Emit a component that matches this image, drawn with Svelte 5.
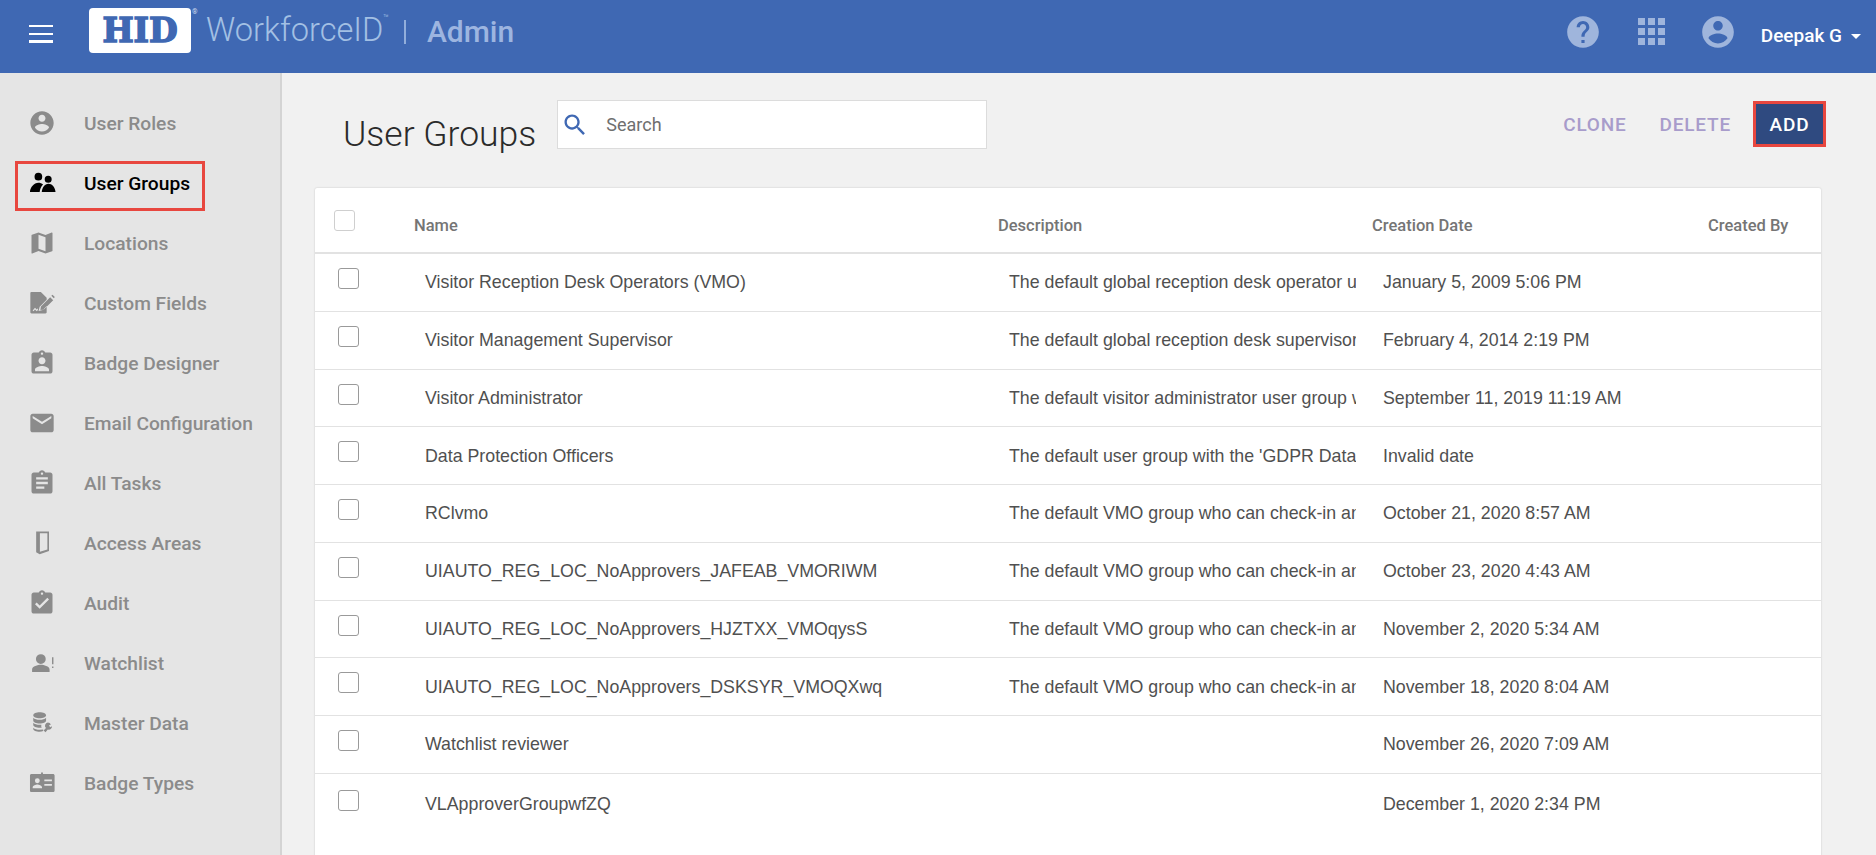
<script>
  const clipboard = 'M19 3h-4.18C14.4 1.84 13.3 1 12 1c-1.3 0-2.4.84-2.82 2H5c-1.1 0-2 .9-2 2v14c0 1.1.9 2 2 2h14c1.1 0 2-.9 2-2V5c0-1.1-.9-2-2-2zm-7 0c.55 0 1 .45 1 1s-.45 1-1 1-1-.45-1-1 .45-1 1-1z';
  const account = 'M12 2C6.48 2 2 6.48 2 12s4.48 10 10 10 10-4.48 10-10S17.52 2 12 2zm0 3c1.66 0 3 1.34 3 3s-1.34 3-3 3-3-1.34-3-3 1.34-3 3-3zm0 14.2c-2.5 0-4.71-1.28-6-3.22.03-1.99 4-3.08 6-3.08 1.99 0 5.97 1.09 6 3.08-1.29 1.94-3.5 3.22-6 3.22z';

  const nav = [
    { label: 'User Roles', icon: account },
    { label: 'User Groups', active: true, icon: 'M8.9 3.3a3.3 3.3 0 1 1 0 6.6 3.3 3.3 0 0 1 0-6.6zM17.3 5.8a3 3 0 1 1 0 6 3 3 0 0 1 0-6zM1.7 19.7c.1-4 3.5-8 7.2-8 1.5 0 2.9.5 4 1.5-1.6 1.6-2.7 4-2.9 6.5zM11.8 19.7c.3-3.5 2.5-7 5.7-7 3 0 5.8 3 6.1 7z' },
    { label: 'Locations', icon: 'M20.5 3l-.16.03L15 5.1 9 3 3.36 4.9c-.21.07-.36.25-.36.48V20.5c0 .28.22.5.5.5l.16-.03L9 18.9l6 2.1 5.64-1.9c.21-.07.36-.25.36-.48V3.5c0-.28-.22-.5-.5-.5zM15 19l-6-2.11V5l6 2.11V19z' },
    { label: 'Custom Fields', icon: 'M2 3.6c0-.6.4-1 1-1h8l5 5v1.6l-6 6-.9 3.6 3.6-.9 3.3-3.3v5.3c0 .6-.4 1-1 1H3c-.6 0-1-.4-1-1zM4 18.5l2-2.5 1.5 1.5 1-1v1.5L7.5 19 6 17.6 4.7 19zM19 7l2.6 2.6-8 8-3 .5.5-3zM20 5.8l1-.9 2 2-.9 1z' },
    { label: 'Badge Designer', icon: clipboard + 'm0 4c1.66 0 3 1.34 3 3s-1.34 3-3 3-3-1.34-3-3 1.34-3 3-3zm6 12H6v-1.4c0-2 4-3.1 6-3.1s6 1.1 6 3.1V19z' },
    { label: 'Email Configuration', icon: 'M20 4H4c-1.1 0-1.99.9-1.99 2L2 18c0 1.1.9 2 2 2h16c1.1 0 2-.9 2-2V6c0-1.1-.9-2-2-2zm0 4l-8 5-8-5V6l8 5 8-5v2z' },
    { label: 'All Tasks', icon: clipboard + 'm2 14H7v-2h7v2zm3-4H7v-2h10v2zm0-4H7V7h10v2z' },
    { label: 'Access Areas', icon: 'M7 2.2h11v16.6l-8 2.8-3-1.6zM10.2 3.6v15.9l6.4-1.9V3.6z' },
    { label: 'Audit', icon: clipboard + 'm-2 14l-4-4 1.41-1.41L10 14.17l6.59-6.59L18 9l-8 8z' },
    { label: 'Watchlist', icon: 'M11 4.4a4.2 4.2 0 1 1 0 8.4 4.2 4.2 0 0 1 0-8.4zM3.5 19.8v-2.2c0-2.7 5-4 7.5-4s7.5 1.3 7.5 4v2.2zM20.6 7h1.2v6h-1.2zM20.6 15h1.2v1.3h-1.2z' },
    { label: 'Master Data', icon: 'M10 2.8c3 0 5.5 1.1 5.5 2.6S13 8 10 8 4.5 6.9 4.5 5.4 7 2.8 10 2.8zM4.5 7.4C5.6 8.7 7.7 9.2 10 9.2s4.4-.5 5.5-1.8v2.4c0 1.5-2.5 2.6-5.5 2.6s-5.5-1.1-5.5-2.6zM4.5 11.8c1.1 1.3 3.2 1.8 5.5 1.8l1.5-.1c-.3.8-.2 1.7.2 2.5l-1.7.1c-3 0-5.5-1.1-5.5-2.6zM4.5 16c1.1 1.3 3.2 1.8 5.5 1.8l3-.3v1.4c-.9.4-1.9.6-3 .6-3 0-5.5-1.1-5.5-2.6zM17 11.5a2.8 2.8 0 0 1 2.6 1.7l-1.6.9 1 1.6 1.6-.9a2.8 2.8 0 0 1-3.6 2.8l-2 2.3-1.6-1.4 2-2.2a2.8 2.8 0 0 1 1.6-4.8z' },
    { label: 'Badge Types', icon: 'M3 4.2h8.2V3h1.6v1.2H21.4c.8 0 1.4.6 1.4 1.4v12.8c0 .8-.6 1.4-1.4 1.4H3c-.8 0-1.3-.6-1.3-1.4V5.6c0-.8.5-1.4 1.3-1.4zM8 8a2.1 2.1 0 1 0 0 4.2 2.1 2.1 0 0 0 0-4.2zM4 16.6h8v-1c0-1.5-2.7-2.4-4-2.4s-4 .9-4 2.4zM14 9v1.6h6.5V9zM14 12.8v1.6h6.5v-1.6z' }
  ];

  const rows = [
    { name: 'Visitor Reception Desk Operators (VMO)', desc: 'The default global reception desk operator user group with access to the visitor module', date: 'January 5, 2009 5:06 PM' },
    { name: 'Visitor Management Supervisor', desc: 'The default global reception desk supervisor user group with access to the visitor module', date: 'February 4, 2014 2:19 PM' },
    { name: 'Visitor Administrator', desc: 'The default visitor administrator user group with access to all visitor settings', date: 'September 11, 2019 11:19 AM' },
    { name: 'Data Protection Officers', desc: "The default user group with the 'GDPR Data Protection Officer' role assigned", date: 'Invalid date' },
    { name: 'RClvmo', desc: 'The default VMO group who can check-in and check-out visitors', date: 'October 21, 2020 8:57 AM' },
    { name: 'UIAUTO_REG_LOC_NoApprovers_JAFEAB_VMORIWM', desc: 'The default VMO group who can check-in and check-out visitors', date: 'October 23, 2020 4:43 AM' },
    { name: 'UIAUTO_REG_LOC_NoApprovers_HJZTXX_VMOqysS', desc: 'The default VMO group who can check-in and check-out visitors', date: 'November 2, 2020 5:34 AM' },
    { name: 'UIAUTO_REG_LOC_NoApprovers_DSKSYR_VMOQXwq', desc: 'The default VMO group who can check-in and check-out visitors', date: 'November 18, 2020 8:04 AM' },
    { name: 'Watchlist reviewer', desc: '', date: 'November 26, 2020 7:09 AM' },
    { name: 'VLApproverGroupwfZQ', desc: '', date: 'December 1, 2020 2:34 PM' }
  ];
</script>

<div class="page">
  <header class="topbar">
    <button class="burger" aria-label="Menu"><span></span><span></span><span></span></button>
    <div class="logo"><span class="hid">HID</span></div>
    <span class="reg">®</span>
    <span class="product">WorkforceID<sup>™</sup></span>
    <span class="divider"></span>
    <span class="admin">Admin</span>
    <div class="top-right">
      <svg class="top-icon help" viewBox="0 0 24 24"><path d="M12 2C6.48 2 2 6.48 2 12s4.48 10 10 10 10-4.48 10-10S17.52 2 12 2zm1 17h-2v-2h2v2zm2.07-7.75l-.9.92C13.45 12.9 13 13.5 13 15h-2v-.5c0-1.1.45-2.1 1.17-2.83l1.24-1.26c.37-.36.59-.86.59-1.41 0-1.1-.9-2-2-2s-2 .9-2 2H8c0-2.21 1.79-4 4-4s4 1.79 4 4c0 .88-.36 1.68-.93 2.25z" /></svg>
      <div class="apps">
        {#each Array(9) as _}<i></i>{/each}
      </div>
      <svg class="top-icon account" viewBox="0 0 24 24"><path d={account} /></svg>
      <span class="user">Deepak G</span>
      <span class="caret"></span>
    </div>
  </header>

  <div class="body">
    <nav class="sidebar">
      {#each nav as item}
        <div class="nav-item" class:active={item.active}>
          <svg class="nav-icon" viewBox="0 0 24 24"><path fill-rule="evenodd" d={item.icon} /></svg>
          <span>{item.label}</span>
        </div>
      {/each}
    </nav>

    <main class="main">
      <div class="toolbar">
        <h1>User Groups</h1>
        <div class="search">
          <svg viewBox="0 0 24 24"><path d="M15.5 14h-.79l-.28-.27C15.41 12.59 16 11.11 16 9.5 16 5.91 13.09 3 9.5 3S3 5.91 3 9.5 5.91 16 9.5 16c1.61 0 3.09-.59 4.23-1.57l.27.28v.79l5 4.99L20.49 19l-4.99-5zm-6 0C7.01 14 5 11.99 5 9.5S7.01 5 9.5 5 14 7.01 14 9.5 11.99 14 9.5 14z" /></svg>
          <input type="text" placeholder="Search" />
        </div>
        <div class="actions">
          <button class="link">CLONE</button>
          <button class="link">DELETE</button>
          <button class="add">ADD</button>
        </div>
      </div>

      <section class="card">
        <div class="row head">
          <div class="check"><span class="box light"></span></div>
          <div>Name</div>
          <div>Description</div>
          <div>Creation Date</div>
          <div>Created By</div>
        </div>
        {#each rows as row}
          <div class="row">
            <div class="check"><span class="box"></span></div>
            <div class="cell">{row.name}</div>
            <div class="cell desc">{row.desc}</div>
            <div class="cell">{row.date}</div>
            <div class="cell"></div>
          </div>
        {/each}
      </section>
    </main>
  </div>
</div>

<style>
  :global(body) {
    margin: 0;
    font-family: Roboto, sans-serif;
    overflow: hidden;
  }

  .page {
    height: 855px;
    display: flex;
    flex-direction: column;
    overflow: hidden;
  }

  .topbar {
    height: 73px;
    flex: none;
    background: #3f68b3;
    display: flex;
    align-items: flex-start;
  }

  .burger {
    width: 24px;
    margin: 25px 0 0 29px;
    padding: 0;
    border: none;
    background: none;
    display: flex;
    flex-direction: column;
    gap: 5.3px;
  }

  .burger span {
    height: 2.4px;
    background: #fff;
  }

  .logo {
    width: 102px;
    height: 45px;
    margin: 8px 0 0 36px;
    background: #fff;
    border-radius: 4px;
    display: flex;
    align-items: center;
    justify-content: center;
  }

  .hid {
    font-family: "DejaVu Serif", serif;
    font-weight: 700;
    font-size: 33px;
    line-height: 1;
    color: #3f68b3;
    -webkit-text-stroke: 1.5px #3f68b3;
  }

  .reg {
    font-size: 7px;
    color: #cfdcf0;
    margin: 8px 0 0 1px;
    width: 14px;
  }

  .product {
    font-weight: 300;
    font-size: 32.6px;
    line-height: 1;
    margin-top: 14px;
    color: #a3c0e4;
  }

  .product sup {
    font-size: 9px;
    vertical-align: 20px;
    line-height: 0;
  }

  .divider {
    width: 2px;
    height: 24px;
    margin: 20px 0 0 15px;
    background: #92aedb;
  }

  .admin {
    font-weight: 500;
    font-size: 30px;
    line-height: 1;
    margin: 17px 0 0 21px;
    color: #9db5e0;
  }

  .top-right {
    margin-left: auto;
    display: flex;
    align-items: flex-start;
    height: 100%;
  }

  .top-icon {
    width: 38px;
    height: 38px;
    fill: #9fb5dc;
    margin-top: 13px;
  }

  .apps {
    width: 27px;
    height: 27px;
    margin: 18px 0 0 36px;
    display: grid;
    grid-template-columns: repeat(3, 7px);
    grid-auto-rows: 7px;
    gap: 3px;
  }

  .apps i {
    background: #9fb5dc;
  }

  .account {
    margin-left: 34px;
  }

  .user {
    margin: 25px 0 0 24px;
    font-size: 19px;
    font-weight: 500;
    line-height: 22px;
    color: #fff;
  }

  .caret {
    width: 0;
    height: 0;
    margin: 34px 15px 0 9px;
    border-left: 5px solid transparent;
    border-right: 5px solid transparent;
    border-top: 5px solid #fff;
  }

  .body {
    flex: 1;
    display: flex;
    min-height: 0;
  }

  .sidebar {
    width: 280px;
    flex: none;
    padding-top: 20px;
    background: #e5e5e5;
    border-right: 2px solid #d4d4d4;
  }

  .nav-item {
    height: 60px;
    display: flex;
    align-items: center;
    gap: 28px;
    padding-left: 28px;
    font-size: 19.2px;
    font-weight: 500;
    color: #8b8b8b;
    position: relative;
  }

  .nav-item.active {
    color: #000;
  }

  .nav-item.active::after {
    content: '';
    position: absolute;
    left: 15px;
    top: 8px;
    width: 190px;
    height: 50px;
    box-sizing: border-box;
    border: 3px solid #e8473f;
  }

  .nav-icon {
    width: 28px;
    height: 28px;
    flex: none;
    fill: currentColor;
  }

  .main {
    flex: 1;
    min-width: 0;
    background: #f1f1f1;
  }

  .toolbar {
    display: flex;
    align-items: flex-start;
    height: 115px;
    box-sizing: border-box;
    padding: 27px 50px 0 61px;
  }

  h1 {
    margin: 14px 0 0;
    font-size: 35.5px;
    line-height: 40px;
    font-weight: 300;
    color: #2b2b2b;
  }

  .search {
    width: 430px;
    height: 49px;
    box-sizing: border-box;
    margin-left: 21px;
    padding-left: 3px;
    background: #fff;
    border: 1px solid #dcdcdc;
    display: flex;
    align-items: center;
  }

  .search svg {
    width: 28px;
    height: 28px;
    flex: none;
    fill: #3f68b3;
  }

  .search input {
    flex: 1;
    min-width: 0;
    margin-left: 15px;
    border: none;
    outline: none;
    background: none;
    font: 400 18px Roboto, sans-serif;
    color: #555;
  }

  .search input::placeholder {
    color: #6f6f6f;
    opacity: 1;
  }

  .actions {
    margin-left: auto;
    margin-top: 1px;
    display: flex;
    align-items: center;
  }

  .actions button {
    font: 500 19px Roboto, sans-serif;
    letter-spacing: 0.8px;
    padding: 0;
    border: none;
    background: none;
  }

  .actions .link {
    color: #a89ccb;
    margin-right: 33px;
  }

  .actions .link + .link {
    margin-right: 22px;
  }

  .actions .add {
    width: 73px;
    height: 46px;
    box-sizing: border-box;
    background: #2f4a80;
    border: 3px solid #e8473f;
    color: #fff;
  }

  .card {
    margin: 0 55px 0 33px;
    height: 700px;
    background: #fff;
    border-radius: 2px;
    box-shadow: 0 0 2px rgba(0, 0, 0, 0.2);
  }

  .row {
    display: grid;
    grid-template-columns: 99px 584px 374px 336px 1fr;
    height: 57.75px;
    box-sizing: border-box;
    border-bottom: 1px solid #e2e2e2;
    align-items: center;
    font-family: "Liberation Sans", Arial, sans-serif;
    font-size: 17.8px;
    color: #505050;
  }

  .row:last-child {
    border-bottom: none;
    padding-top: 2px;
  }

  .row.head {
    height: 66px;
    border-bottom: 2px solid #e2e2e2;
    font-family: Roboto, sans-serif;
    font-size: 16.5px;
    font-weight: 500;
    color: #757575;
    padding-top: 11px;
  }

  .cell {
    padding-left: 11px;
    white-space: nowrap;
    padding-top: 1px;
  }

  .desc {
    overflow: hidden;
    margin-right: 16px;
  }

  .check {
    padding-left: 23px;
    align-self: start;
    padding-top: 14px;
    display: flex;
  }

  .head .check {
    padding-left: 19px;
    padding-top: 11px;
  }

  .box {
    width: 21px;
    height: 21px;
    box-sizing: border-box;
    border: 1px solid #9a9a9a;
    border-radius: 3px;
    background: #fff;
  }

  .box.light {
    border-color: #cfcfcf;
  }
</style>
